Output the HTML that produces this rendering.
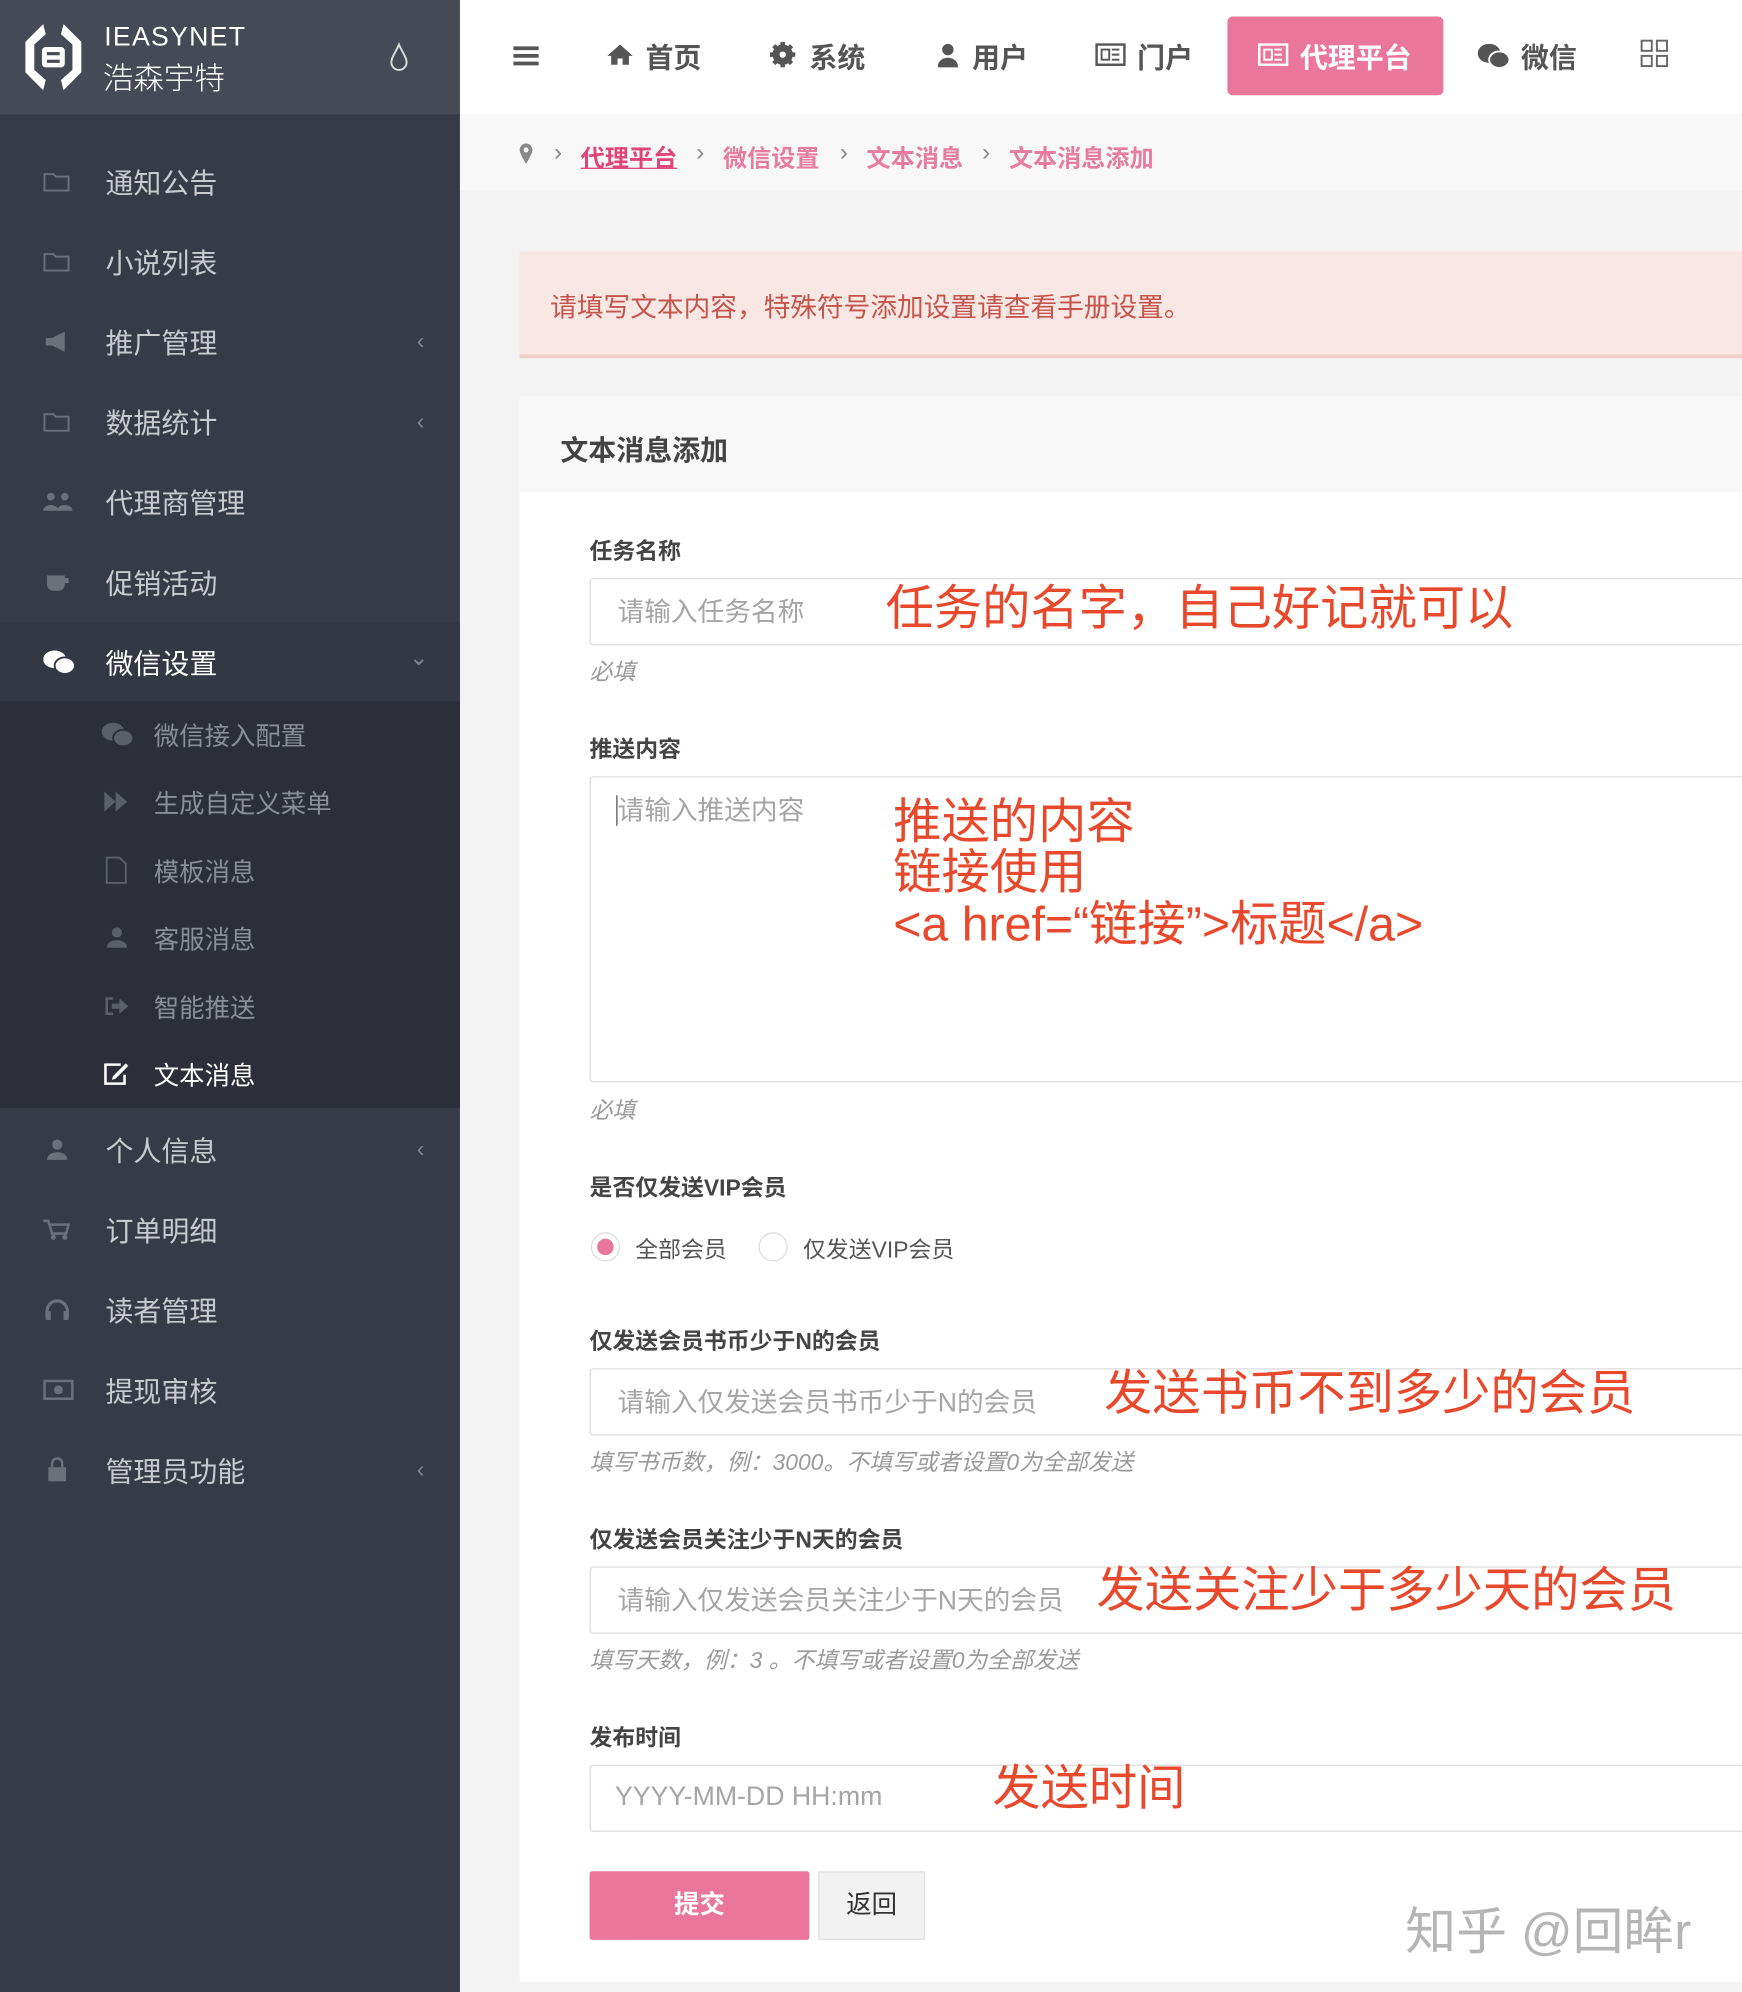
<!DOCTYPE html>
<html><head><meta charset="utf-8"><style>
*{margin:0;padding:0;box-sizing:border-box}
html,body{width:1742px;height:1992px;overflow:hidden;background:#f3f3f3}
#w{position:absolute;left:0;top:0;width:1371px;height:1568px;transform:scale(1.2706,1.2704);transform-origin:0 0;font-family:"Liberation Sans","Noto Sans CJK SC",sans-serif;background:#f3f3f3}
.a{position:absolute;white-space:nowrap}
.sb{position:absolute;left:0;top:0;width:362px;height:1568px;background:#373b47}
.mi{position:absolute;left:83px;font-size:22px;color:#c8cad0;transform:translateY(-50%)}
.ic{position:absolute;left:34px;transform:translateY(-50%)}
.si{position:absolute;left:121px;font-size:20px;color:#8a8e97;transform:translateY(-50%)}
.ch{position:absolute;left:328px;color:#80848d;font-size:18px;transform:translateY(-50%)}
.tn{position:absolute;top:44px;transform:translateY(-50%);font-size:22px;color:#555;font-weight:bold}
.lb{position:absolute;left:464px;font-size:18px;color:#444;font-weight:bold;transform:translateY(-50%)}
.in{position:absolute;left:464px;width:920px;border:1px solid #dcdcdc;border-radius:3px;background:#fff}
.ph{position:absolute;left:486px;font-size:21px;color:#a5a5a5;transform:translateY(-50%)}
.hp{position:absolute;left:464px;font-size:18px;color:#9a9a9a;font-style:italic;transform:translateY(-50%)}
.rd{position:absolute;color:#e8482b;font-size:38px;transform:translateY(-50%)}
.bc{position:absolute;top:110px;font-size:19px;color:#e67ca0;font-weight:bold}
.bs{position:absolute;top:110px;font-size:19px;color:#888}
</style></head><body><div id="w">
<div class="sb"></div>
<div class="a" style="left:0;top:0;width:362px;height:90px;background:#454a56"></div>
<svg class="a" style="left:14px;top:17px" width="56" height="56" viewBox="0 0 56 56"><path d="M20 2 L6 16 V40 L20 54 L22 46 L13 38 V18 L22 10Z M36 2 L50 16 V40 L36 54 L34 46 L43 38 V18 L34 10Z" fill="#fff"/><rect x="19" y="20" width="18" height="16" rx="3" fill="#fff"/><rect x="23" y="24" width="10" height="2.5" fill="#454a56"/><rect x="23" y="30" width="10" height="2.5" fill="#454a56"/></svg>
<div class="a" style="left:82px;top:18px;font-size:21px;color:#fff;letter-spacing:1px">IEASYNET</div>
<div class="a" style="left:81px;top:42px;font-size:24px;color:#fff;font-weight:300">浩森宇特</div>
<svg class="a" style="left:306px;top:33px" width="16" height="24" viewBox="0 0 16 24"><path d="M8 2 C5 9 2 12 2 16 A6 6 0 0 0 14 16 C14 12 11 9 8 2Z" fill="none" stroke="#ddd" stroke-width="1.5"/></svg>

<svg class="ic" style="top:143px" width="24" height="18"><path d="M1 3h7l2 2h10v11H1z" fill="none" stroke="#6c707b" stroke-width="1.5"/></svg><div class="mi" style="top:143px">通知公告</div>
<svg class="ic" style="top:206px" width="24" height="18"><path d="M1 3h7l2 2h10v11H1z" fill="none" stroke="#6c707b" stroke-width="1.5"/></svg><div class="mi" style="top:206px">小说列表</div>
<svg class="ic" style="top:269px" width="24" height="18"><path d="M2 6h5l10-5v16l-10-5H2z" fill="#6c707b"/></svg><div class="mi" style="top:269px">推广管理</div><div class="ch" style="top:269px">‹</div>
<svg class="ic" style="top:332px" width="24" height="18"><path d="M1 3h7l2 2h10v11H1z" fill="none" stroke="#6c707b" stroke-width="1.5"/></svg><div class="mi" style="top:332px">数据统计</div><div class="ch" style="top:332px">‹</div>
<svg class="ic" style="top:395px" width="24" height="18"><circle cx="6" cy="5" r="3" fill="#6c707b"/><circle cx="17" cy="5" r="3" fill="#6c707b"/><path d="M0 16c0-6 12-6 12 0zM11 16c0-6 12-6 12 0z" fill="#6c707b"/></svg><div class="mi" style="top:395px">代理商管理</div>
<svg class="ic" style="top:458px" width="24" height="18"><path d="M3 4h14v7a5 5 0 0 1-5 5H8a5 5 0 0 1-5-5z M17 6h3v4h-3" fill="#6c707b"/></svg><div class="mi" style="top:458px">促销活动</div>
<div class="a" style="left:0;top:490px;width:362px;height:62px;background:#333844"></div>
<svg class="ic" style="top:521px" width="26" height="20"><ellipse cx="9" cy="8" rx="9" ry="7" fill="#fff"/><ellipse cx="17" cy="13" rx="8" ry="6.5" fill="#fff" stroke="#333844" stroke-width="1.5"/></svg><div class="mi" style="top:521px;color:#fff">微信设置</div><div class="ch" style="top:518px;left:322px">⌄</div>
<div class="a" style="left:0;top:552px;width:362px;height:320px;background:#2c2f39"></div>
<svg class="ic" style="top:578px;left:80px" width="26" height="20"><ellipse cx="9" cy="8" rx="9" ry="7" fill="#5b5f69"/><ellipse cx="17" cy="13" rx="8" ry="6.5" fill="#5b5f69" stroke="#2c2f39" stroke-width="1.5"/></svg><div class="si" style="top:578px">微信接入配置</div>
<svg class="ic" style="top:631px;left:82px" width="20" height="18"><path d="M0 1l9 8-9 8zM9 1l9 8-9 8z" fill="#5b5f69"/></svg><div class="si" style="top:631px">生成自定义菜单</div>
<svg class="ic" style="top:685px;left:83px" width="18" height="22"><path d="M1 1h10l5 5v15H1z" fill="none" stroke="#5b5f69" stroke-width="1.5"/></svg><div class="si" style="top:685px">模板消息</div>
<svg class="ic" style="top:738px;left:84px" width="16" height="18"><circle cx="8" cy="5" r="4" fill="#5b5f69"/><path d="M0 17c0-8 16-8 16 0z" fill="#5b5f69"/></svg><div class="si" style="top:738px">客服消息</div>
<svg class="ic" style="top:792px;left:82px" width="20" height="18"><path d="M7 3H2v12h5" fill="none" stroke="#5b5f69" stroke-width="2"/><path d="M6 7h6V3l7 6-7 6v-4H6z" fill="#5b5f69"/></svg><div class="si" style="top:792px">智能推送</div>
<svg class="ic" style="top:845px;left:81px" width="22" height="20"><path d="M14 3H2v15h15v-7" fill="none" stroke="#fff" stroke-width="2"/><path d="M8 12l10-10 2 2-10 10-3 1z" fill="#fff"/></svg><div class="si" style="top:845px;color:#fff">文本消息</div>
<svg class="ic" style="top:905px;left:37px" width="16" height="18"><circle cx="8" cy="5" r="4" fill="#6c707b"/><path d="M0 17c0-8 16-8 16 0z" fill="#6c707b"/></svg><div class="mi" style="top:905px">个人信息</div><div class="ch" style="top:905px">‹</div>
<svg class="ic" style="top:968px" width="22" height="18"><path d="M0 2h4l3 10h11l2-7H6" fill="none" stroke="#6c707b" stroke-width="2"/><circle cx="8" cy="15" r="2" fill="#6c707b"/><circle cx="17" cy="15" r="2" fill="#6c707b"/></svg><div class="mi" style="top:968px">订单明细</div>
<svg class="ic" style="top:1031px" width="22" height="18"><path d="M3 15V10a8 8 0 0 1 16 0v5" fill="none" stroke="#6c707b" stroke-width="2.5"/><rect x="2" y="10" width="4" height="7" fill="#6c707b"/><rect x="16" y="10" width="4" height="7" fill="#6c707b"/></svg><div class="mi" style="top:1031px">读者管理</div>
<svg class="ic" style="top:1094px" width="24" height="16"><rect x="1" y="1" width="22" height="14" fill="none" stroke="#6c707b" stroke-width="2"/><circle cx="12" cy="8" r="3.5" fill="#6c707b"/></svg><div class="mi" style="top:1094px">提现审核</div>
<svg class="ic" style="top:1157px;left:36px" width="18" height="20"><rect x="2" y="8" width="14" height="11" fill="#6c707b"/><path d="M5 8V5a4 4 0 0 1 8 0v3" fill="none" stroke="#6c707b" stroke-width="2"/></svg><div class="mi" style="top:1157px">管理员功能</div><div class="ch" style="top:1157px">‹</div>

<div class="a" style="left:362px;top:0;width:1009px;height:90px;background:#fff"></div>
<svg class="a" style="left:404px;top:36px" width="20" height="16"><path d="M0 2h20M0 8h20M0 14h20" stroke="#555" stroke-width="3"/></svg>
<svg class="a" style="left:478px;top:34px" width="20" height="18"><path d="M10 1L0 10h3v7h5v-5h4v5h5v-7h3z" fill="#555"/></svg><div class="tn" style="left:508px">首页</div>
<svg class="a" style="left:606px;top:33px" width="20" height="20"><circle cx="10" cy="10" r="6" fill="none" stroke="#555" stroke-width="4"/><path d="M10 0v20M0 10h20M3 3l14 14M17 3L3 17" stroke="#555" stroke-width="3.5"/><circle cx="10" cy="10" r="2.5" fill="#fff"/></svg><div class="tn" style="left:637px">系统</div>
<svg class="a" style="left:738px;top:34px" width="16" height="20"><circle cx="8" cy="5" r="4.5" fill="#555"/><path d="M0 19c0-10 16-10 16 0z" fill="#555"/></svg><div class="tn" style="left:765px">用户</div>
<svg class="a" style="left:862px;top:34px" width="24" height="18"><rect x="1" y="1" width="22" height="16" fill="none" stroke="#555" stroke-width="2"/><path d="M5 5h6v8H5zM13 5h6M13 9h6M13 13h6" stroke="#555" stroke-width="1.5" fill="none"/></svg><div class="tn" style="left:895px">门户</div>
<div class="a" style="left:966px;top:13px;width:170px;height:62px;background:#ea769b;border-radius:4px"></div>
<svg class="a" style="left:990px;top:34px" width="24" height="18"><rect x="1" y="1" width="22" height="16" fill="none" stroke="#fff" stroke-width="2"/><path d="M5 5h6v8H5zM13 5h6M13 9h6M13 13h6" stroke="#fff" stroke-width="1.5" fill="none"/></svg><div class="tn" style="left:1023px;color:#fff">代理平台</div>
<svg class="a" style="left:1163px;top:33px" width="26" height="22"><ellipse cx="9" cy="9" rx="9" ry="7.5" fill="#555"/><ellipse cx="17" cy="14" rx="8" ry="6.5" fill="#555" stroke="#fff" stroke-width="1.5"/></svg><div class="tn" style="left:1197px">微信</div>
<svg class="a" style="left:1291px;top:31px" width="23" height="23"><g fill="none" stroke="#666" stroke-width="1.5"><rect x="1" y="1" width="8" height="8"/><rect x="13" y="1" width="8" height="8"/><rect x="1" y="13" width="8" height="8"/><rect x="13" y="13" width="8" height="8"/></g></svg>
<div class="a" style="left:362px;top:90px;width:1009px;height:60px;background:#f8f8f8"></div>
<svg class="a" style="left:408px;top:112px" width="12" height="18"><path d="M6 17C2 10 1 8 1 6a5 5 0 0 1 10 0c0 2-1 4-5 11z" fill="#888"/><circle cx="6" cy="6" r="2" fill="#f8f8f8"/></svg>
<div class="bs" style="left:436px">›</div>
<div class="bc" style="left:457px;color:#e0457a;text-decoration:underline">代理平台</div>
<div class="bs" style="left:548px">›</div><div class="bc" style="left:569px">微信设置</div>
<div class="bs" style="left:661px">›</div><div class="bc" style="left:682px">文本消息</div>
<div class="bs" style="left:773px">›</div><div class="bc" style="left:794px">文本消息添加</div>

<div class="a" style="left:409px;top:198px;width:962px;height:84px;background:#f8e7e3;border-bottom:3px solid #f1cfc7"></div>
<div class="a" style="left:433px;top:226px;font-size:21px;color:#c5554c">请填写文本内容，特殊符号添加设置请查看手册设置。</div>
<div class="a" style="left:409px;top:312px;width:962px;height:1248px;background:#fff"></div>
<div class="a" style="left:409px;top:312px;width:962px;height:75px;background:#f8f8f8"></div>
<div class="a" style="left:441px;top:337px;font-size:22px;color:#444;font-weight:bold">文本消息添加</div>

<div class="lb" style="top:433px">任务名称</div>
<div class="in" style="top:455px;height:53px"></div>
<div class="ph" style="top:481px">请输入任务名称</div>
<div class="hp" style="top:528px">必填</div>
<div class="lb" style="top:589px">推送内容</div>
<div class="in" style="top:611px;height:241px"></div>
<div class="a" style="left:485px;top:626px;width:1px;height:24px;background:#555"></div>
<div class="ph" style="top:637px">请输入推送内容</div>
<div class="hp" style="top:873px">必填</div>
<div class="lb" style="top:934px">是否仅发送VIP会员</div>
<div class="a" style="left:465px;top:970px;width:23px;height:23px;border-radius:50%;border:1px solid #ddd;background:#fff"></div>
<div class="a" style="left:470px;top:975px;width:13px;height:13px;border-radius:50%;background:#ea769b"></div>
<div class="a" style="left:500px;top:970px;font-size:18px;color:#555">全部会员</div>
<div class="a" style="left:597px;top:970px;width:23px;height:23px;border-radius:50%;border:1px solid #ddd;background:#fff"></div>
<div class="a" style="left:632px;top:970px;font-size:18px;color:#555">仅发送VIP会员</div>
<div class="lb" style="top:1055px">仅发送会员书币少于N的会员</div>
<div class="in" style="top:1077px;height:53px"></div>
<div class="ph" style="top:1103px">请输入仅发送会员书币少于N的会员</div>
<div class="hp" style="top:1150px">填写书币数，例：3000。不填写或者设置0为全部发送</div>
<div class="lb" style="top:1211px">仅发送会员关注少于N天的会员</div>
<div class="in" style="top:1233px;height:53px"></div>
<div class="ph" style="top:1259px">请输入仅发送会员关注少于N天的会员</div>
<div class="hp" style="top:1306px">填写天数，例：3 。不填写或者设置0为全部发送</div>
<div class="lb" style="top:1367px">发布时间</div>
<div class="in" style="top:1389px;height:53px"></div>
<div class="ph" style="top:1415px;left:484px">YYYY-MM-DD HH:mm</div>
<div class="a" style="left:464px;top:1473px;width:173px;height:54px;background:#ea769b;border-radius:2px;color:#fff;font-size:20px;font-weight:bold;text-align:center;line-height:54px">提交</div>
<div class="a" style="left:644px;top:1473px;width:84px;height:54px;background:#f2f2f2;border:1px solid #e2e2e2;color:#333;font-size:20px;text-align:center;line-height:52px">返回</div>

<div class="rd" style="left:697px;top:475px">任务的名字，自己好记就可以</div>
<div class="rd" style="left:703px;top:643px">推送的内容</div>
<div class="rd" style="left:703px;top:683px">链接使用</div>
<div class="rd" style="left:703px;top:724px">&lt;a href=“链接”&gt;标题&lt;/a&gt;</div>
<div class="rd" style="left:869px;top:1093px">发送书币不到多少的会员</div>
<div class="rd" style="left:863px;top:1248px">发送关注少于多少天的会员</div>
<div class="rd" style="left:781px;top:1404px">发送时间</div>
<div class="a" style="left:1106px;top:1488px;font-size:40px;color:#b5b5b5">知乎 @回眸r</div>
</div></body></html>
